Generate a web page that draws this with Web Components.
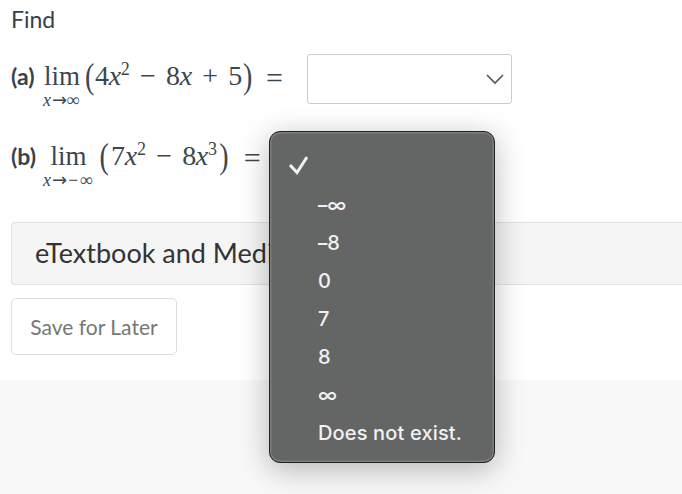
<!DOCTYPE html>
<html>
<head>
<meta charset="utf-8">
<title>Find</title>
<style>
html, body { margin: 0; padding: 0; background: #fff; }
body { width: 682px; height: 494px; overflow: hidden; font-family: "Lato", sans-serif; color: #333; }
</style>
</head>
<body>
<question-page>
  <math-row label="(a)" under="∞" select><span class="paren">(</span>4<i>x</i><sup>2</sup><span class="op">−</span>8<i>x</i><span class="op">+</span>5<span class="paren">)</span></math-row>
  <math-row label="(b)" under="−∞"><span class="paren wide">(</span>7<i>x</i><sup>2</sup><span class="op">−</span>8<i>x</i><sup>3</sup><span class="paren wide">)</span></math-row>
</question-page>

<script>
// one answer row: label, limit, expression, equals sign and an optional select
class MathRow extends HTMLElement {
    constructor() {
        super();
        const label = this.getAttribute('label');
        const under = this.getAttribute('under');
        const root = this.attachShadow({mode: 'open'});
        root.innerHTML = `
            <style>
            :host { display: flex; align-items: flex-start; height: 50px; color: #3a4750; }
            .label { font: 700 23px/26px "Lato", sans-serif; color: #37424a; margin-top: 9px; width: 32px; flex: none; }
            .lim { display: flex; flex-direction: column; align-items: center; font: 27px/26px "Liberation Serif", serif; margin-top: 9px; }
            .under { font: italic 18px/14px "Liberation Serif", serif; margin-top: 4px; white-space: nowrap; letter-spacing: 1px; }
            .under b { font: 18px/14px "DejaVu Sans", sans-serif; letter-spacing: 0; }
            .expr { font: 28px/26px "Liberation Serif", serif; margin: 9px 0 0 3px; white-space: nowrap; letter-spacing: -.3px; }
            .eq { font: 30px/26px "Liberation Serif", serif; margin: 11px 0 0 13px; }
            ::slotted(sup) { font-size: 18px; line-height: 0; vertical-align: 10px; }
            ::slotted(.op) { margin: 0 10.5px; }
            ::slotted(.paren) { display: inline-block; transform: scale(1, 1.3); margin: 0 1px; }
            ::slotted(.wide) { margin: 0 2.5px; }
            </style>
            <span class="label">${label}</span>
            <span class="lim">lim<span class="under">x<b>→</b>${under}</span></span>
            <span class="expr"><slot></slot></span>
            <span class="eq">=</span>
            ${this.hasAttribute('select') ? '<answer-select></answer-select>' : ''}
        `;
    }
}

class AnswerSelect extends HTMLElement {
    constructor() {
        super();
        const root = this.attachShadow({mode: 'open'});
        root.innerHTML = `
            <style>
            :host { display: flex; align-items: center; justify-content: flex-end; box-sizing: border-box;
                    width: 205px; height: 50px; margin-left: 24px; padding-right: 7px;
                    background: #fff; border: 1px solid #ccc; border-radius: 3px; }
            svg { display: block; }
            </style>
            <svg width="18" height="12" viewBox="0 0 18 12"><path d="M1 2l8 8 8-8" fill="none" stroke="#555" stroke-width="1.6"/></svg>
        `;
    }
}

class PopupMenu extends HTMLElement {
    constructor() {
        super();
        const items = ['−∞', '−8', '0', '7', '8', '∞', 'Does not exist.'];
        const root = this.attachShadow({mode: 'open'});
        root.innerHTML = `
            <style>
            :host { position: absolute; left: 269px; top: 131px; width: 226px; height: 332px; box-sizing: border-box;
                    background: #646565; border: 1px solid #222; border-radius: 11px;
                    box-shadow: inset 0 0 0 1.5px #7d7e7e, 0 6px 30px rgba(0,0,0,.28);
                    padding-top: 16px; color: #f1f1f1; font: 500 20px/38px "Inter", "Liberation Sans", sans-serif; letter-spacing: .15px; }
            .item { height: 38px; padding-left: 48px; white-space: nowrap; }
            .check { padding-left: 18px; display: flex; align-items: center; }
            .tight { letter-spacing: -2px; margin-left: -2px; }
            svg { display: block; margin-top: -3px; }
            </style>
            <div class="item check"><svg width="20" height="19" viewBox="0 0 20 19"><path d="M2 9l7 7.5L19 1" fill="none" stroke="#f1f1f1" stroke-width="3"/></svg></div>
            ${items.map(t => `<div class="item${t.startsWith('−') ? ' tight' : ''}">${t}</div>`).join('')}
        `;
    }
}

class QuestionPage extends HTMLElement {
    constructor() {
        super();
        const root = this.attachShadow({mode: 'open'});
        root.innerHTML = `
            <style>
            :host { display: block; position: relative; width: 682px; height: 494px; overflow: hidden; font-family: "Lato", sans-serif; }
            .top { height: 380px; box-sizing: border-box; padding: 5px 0 0 11px; }
            .find { font-size: 23px; line-height: 28px; color: #37424a; margin-bottom: 21px; }
            .rows { display: flex; flex-direction: column; gap: 30px; }
            .bar { box-sizing: border-box; height: 63px; margin-top: 38px; padding-left: 23px; background: #f5f5f5;
                   border: 1px solid #e2e2e2; border-right: 0; border-radius: 4px 0 0 4px; font-size: 27px; line-height: 60px; color: #333; white-space: nowrap; }
            button { display: block; box-sizing: border-box; width: 166px; height: 57px; margin-top: 13px; background: #fff;
                     border: 1px solid #ddd; border-radius: 5px; font: 21px "Lato", sans-serif; color: #777; padding: 0; }
            .foot { height: 114px; background: #f8f8f8; }
            </style>
            <div class="top">
              <div class="find">Find</div>
              <div class="rows"><slot></slot></div>
              <div class="bar">eTextbook and Media</div>
              <button>Save for Later</button>
            </div>
            <div class="foot"></div>
            <popup-menu></popup-menu>
        `;
    }
}

customElements.define('answer-select', AnswerSelect);
customElements.define('math-row', MathRow);
customElements.define('popup-menu', PopupMenu);
customElements.define('question-page', QuestionPage);
</script>
</body>
</html>
